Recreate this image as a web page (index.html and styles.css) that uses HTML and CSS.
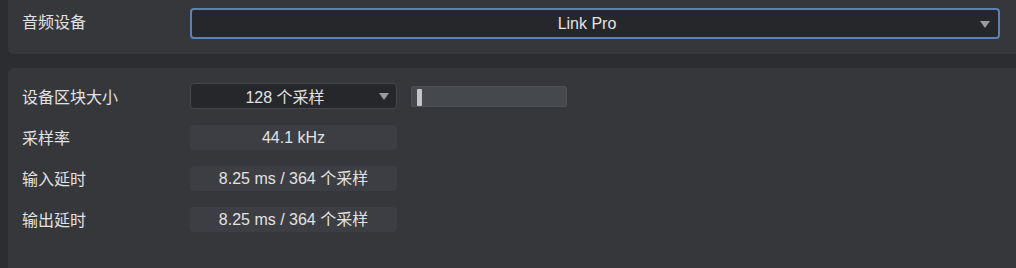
FILE: index.html
```html
<!DOCTYPE html>
<html lang="zh-CN">
<head>
    <meta charset="UTF-8">
    <meta name="viewport" content="width=device-width, initial-scale=1.0">
    <title>音频设备</title>
    <link rel="stylesheet" href="styles.css">
</head>
<body>
    <div class="app">

        <!-- Device selection -->
        <div class="panel device-panel">
            <div class="label">音频设备</div>
            <div class="select select-main">
                <span class="select-text">Link Pro</span>
                <span class="arrow"></span>
            </div>
        </div>

        <!-- Device settings -->
        <div class="panel settings-panel">
            <div class="row">
                <div class="label">设备区块大小</div>
                <div class="select select-small">
                    <span class="select-text">128 个采样</span>
                    <span class="arrow"></span>
                </div>
                <div class="slider">
                    <div class="slider-thumb"></div>
                </div>
            </div>
            <div class="row">
                <div class="label">采样率</div>
                <div class="value">44.1 kHz</div>
            </div>
            <div class="row">
                <div class="label">输入延时</div>
                <div class="value">8.25 ms / 364 个采样</div>
            </div>
            <div class="row">
                <div class="label">输出延时</div>
                <div class="value">8.25 ms / 364 个采样</div>
            </div>
        </div>

    </div>
</body>
</html>
```

FILE: styles.css
```css
* {
    box-sizing: border-box;
}

html, body {
    height: 100%;
}

body {
    margin: 0;
    background-color: #252629;
    font-family: "Liberation Sans", "Noto Sans CJK SC", sans-serif;
    font-size: 16px;
    color: #e2e2e2;
    overflow: hidden;
}

.app {
    height: 100%;
    padding-left: 8px;
    display: flex;
    flex-direction: column;
    background-color: #2c2d30;
}

.panel {
    background-color: #36373b;
}

.device-panel {
    height: 54px;
    display: flex;
    align-items: flex-start;
    padding: 8px 16px 0 14px;
    border-bottom-left-radius: 6px;
}

.device-panel .label {
    line-height: 30px;
}

.label {
    width: 168px;
    flex-shrink: 0;
}

.select {
    position: relative;
    display: flex;
    align-items: center;
    justify-content: center;
    background-color: #26272b;
    border-radius: 4px;
}

.select-main {
    flex: 1;
    height: 31px;
    padding-right: 16px;
    border: 2px solid #5d80b6;
}

.select-small {
    width: 207px;
    height: 26px;
    padding-right: 17px;
    border: 1px solid #46474c;
}

.arrow {
    position: absolute;
    right: 8px;
    top: 50%;
    margin-top: -3px;
    width: 0;
    height: 0;
    border-left: 5px solid transparent;
    border-right: 5px solid transparent;
    border-top: 7px solid #9a9b9e;
}

.select-small .arrow {
    right: 7px;
}

.settings-panel {
    flex: 1;
    margin-top: 14px;
    padding: 15px 0 0 14px;
    border-top-left-radius: 6px;
    display: flex;
    flex-direction: column;
    gap: 15px;
}

.row {
    display: flex;
    align-items: center;
    height: 26px;
}

.value {
    width: 207px;
    height: 25px;
    line-height: 25px;
    text-align: center;
    background-color: #3d3e43;
    border-radius: 4px;
}

.slider {
    width: 156px;
    height: 21px;
    margin-left: 14px;
    background-color: #45484c;
    border: 1px solid #4d5054;
    border-radius: 2px;
    padding: 2px 0 0 5px;
}

.slider-thumb {
    width: 5px;
    height: 17px;
    background-color: #c4c4c6;
    border-radius: 1px;
}
```
